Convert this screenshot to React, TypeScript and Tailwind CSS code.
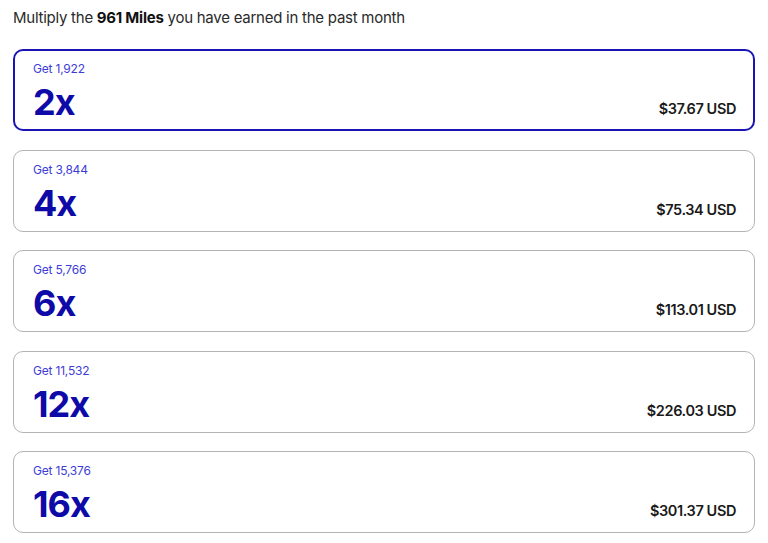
const options = [
  { miles: '1,922', mult: '2x', price: '$37.67 USD', selected: true },
  { miles: '3,844', mult: '4x', price: '$75.34 USD' },
  { miles: '5,766', mult: '6x', price: '$113.01 USD' },
  { miles: '11,532', mult: '12x', price: '$226.03 USD' },
  { miles: '15,376', mult: '16x', price: '$301.37 USD' },
];

export default function App() {
  return (
    <div className="min-h-screen bg-white px-[13px] pt-[8px] font-['Inter',sans-serif]">
      <p className="text-[15px] leading-[20px] tracking-[-0.25px] text-[#2a2a2a]">
        Multiply the <span className="font-bold text-[#111]">961 Miles</span> you have earned in the past month
      </p>
      <div className="mt-[21px] flex flex-col gap-[18.5px]">
        {options.map((o) => (
          <div
            key={o.mult}
            className={
              o.selected
                ? 'flex h-[82px] items-end justify-between rounded-[10px] border-2 border-[#1a14b4] pl-[18px] pr-[17px] pb-[7px] pt-[10px]'
                : 'flex h-[82px] items-end justify-between rounded-[10px] border border-[#b4b4b4] pl-[19px] pr-[18px] pb-[8px] pt-[11px]'
            }
          >
            <div className="flex flex-col">
              <span className="text-[12px] leading-[16px] tracking-[-0.2px] text-[#3d3dd6]">Get {o.miles}</span>
              <span className="mt-[5px] text-[36px] font-bold leading-[40px] tracking-[-1px] text-[#0d0aa8]">{o.mult}</span>
            </div>
            <span className="mb-[3px] text-[14.5px] font-semibold leading-[20px] tracking-[-0.4px] text-[#1a1a1a]">{o.price}</span>
          </div>
        ))}
      </div>
    </div>
  );
}
